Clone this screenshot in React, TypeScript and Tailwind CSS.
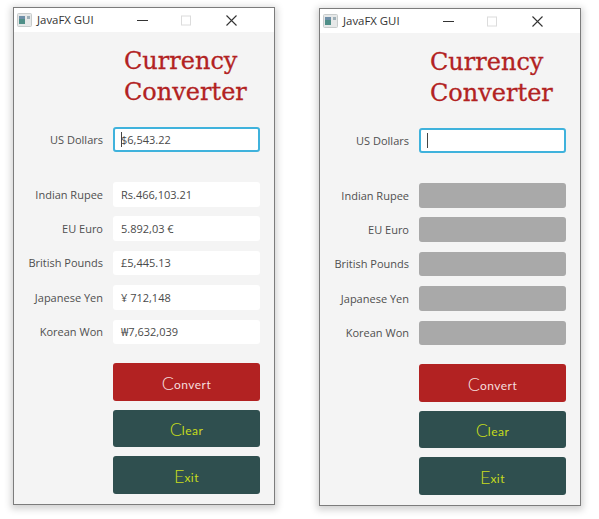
const ui = { fontFamily: '"Open Sans", "Noto Sans", sans-serif' };

function TitleBar() {
  return (
    <div className="flex h-[24px] items-center bg-white">
      <svg width="15" height="14" viewBox="0 0 15 14" className="ml-[3px] shrink-0">
        <rect x="0.5" y="0.5" width="14" height="13" rx="1" fill="#e6e8e8" stroke="#c8cccc" />
        <rect x="2" y="3" width="6" height="8" fill="#4f8f88" />
        <rect x="2" y="3" width="6" height="3" fill="#6f8fa8" />
        <rect x="10" y="3" width="3" height="3" fill="#9fb0b8" />
      </svg>
      <span className="ml-[5px] text-[11.4px] text-[#333333]">JavaFX GUI</span>
      <svg width="120" height="24" viewBox="0 0 120 24" className="ml-auto mr-[17px] shrink-0">
        <line x1="0" y1="12.5" x2="11" y2="12.5" stroke="#333" strokeWidth="1" />
        <rect x="44.5" y="8" width="9" height="9" fill="none" stroke="#dcdcdc" strokeWidth="1" />
        <path d="M89.5 7.5 L99.5 17.5 M99.5 7.5 L89.5 17.5" stroke="#333" strokeWidth="1.1" fill="none" />
      </svg>
    </div>
  );
}

function Row({ label, value, grey }: { label: string; value: string; grey: boolean }) {
  return (
    <div className="flex h-[24.5px] items-center gap-[10px]">
      <span className="w-[89px] pt-px text-right text-[11px] whitespace-nowrap text-[#4f4f4f]">{label}</span>
      <div className={`flex h-full w-[147px] items-center rounded-[3px] pt-px pl-[8px] text-[11px] text-[#4a4a4a] ${grey ? "bg-[#a9a9a9]" : "bg-white"}`}>
        {value}
      </div>
    </div>
  );
}

function AppButton({ first, rest, bg, color }: { first: string; rest: string; bg: string; color: string }) {
  return (
    <button
      className={`flex h-[37.5px] w-[147px] items-end justify-center rounded-[3px] pb-[9px] leading-none ${bg} ${color}`}
      style={{ fontFamily: '"Lato", sans-serif' }}
    >
      <span className="text-[18px] leading-none font-light">{first}</span>
      <span className="pb-px text-[12px] leading-none tracking-[0.5px]">{rest}</span>
    </button>
  );
}

function Win({ filled, className }: { filled: boolean; className: string }) {
  const rows = [
    ["Indian Rupee", "Rs.466,103.21"],
    ["EU Euro", "5.892,03 €"],
    ["British Pounds", "£5,445.13"],
    ["Japanese Yen", "¥ 712,148"],
    ["Korean Won", "₩7,632,039"],
  ];
  return (
    <div
      className={`h-[498px] w-[262px] shrink-0 border border-[#7c7c7c] bg-[#f4f4f4] shadow-[0_2px_7px_2px_rgba(0,0,0,0.18)] ${className}`}
      style={ui}
    >
      <TitleBar />
      <h1
        className="ml-[110px] pt-[14px] text-[24px] leading-[31px] whitespace-nowrap text-[#b22222] [-webkit-text-stroke:0.3px_#b22222]"
        style={{ fontFamily: '"DejaVu Serif", serif', fontWeight: 400 }}
      >
        Currency
        <br />
        Converter
      </h1>
      <div className="mt-[19px] flex h-[25px] items-center gap-[10px]">
        <span className="w-[89px] pt-[2px] text-right text-[11px] text-[#4f4f4f]">US Dollars</span>
        <div className="flex h-full w-[147px] items-center rounded-[3px] border-2 border-[#3fb2dc] bg-white pl-[6px] text-[11px] text-[#4a4a4a]">
          <span className="h-[15px] w-px shrink-0 bg-[#444444]" />
          {filled && <span className="-ml-px pt-px">$6,543.22</span>}
        </div>
      </div>
      <div className="mt-[30px] flex flex-col gap-[9.9px]">
        {rows.map(([l, v]) => (
          <Row key={l} label={l} value={filled ? v : ""} grey={!filled} />
        ))}
      </div>
      <div className="mt-[19px] ml-[99px] flex flex-col gap-[9px]">
        <AppButton first="C" rest="onvert" bg="bg-[#b22222]" color="text-[#f5dede]" />
        <AppButton first="C" rest="lear" bg="bg-[#2f4f4f]" color="text-[#c6dc1c]" />
        <AppButton first="E" rest="xit" bg="bg-[#2f4f4f]" color="text-[#c6dc1c]" />
      </div>
    </div>
  );
}

export default function App() {
  return (
    <div className="flex h-[519px] w-[599px] items-start gap-[44px] overflow-hidden bg-white pt-[7px] pl-[13px]">
      <Win filled={true} className="" />
      <Win filled={false} className="mt-px" />
    </div>
  );
}
